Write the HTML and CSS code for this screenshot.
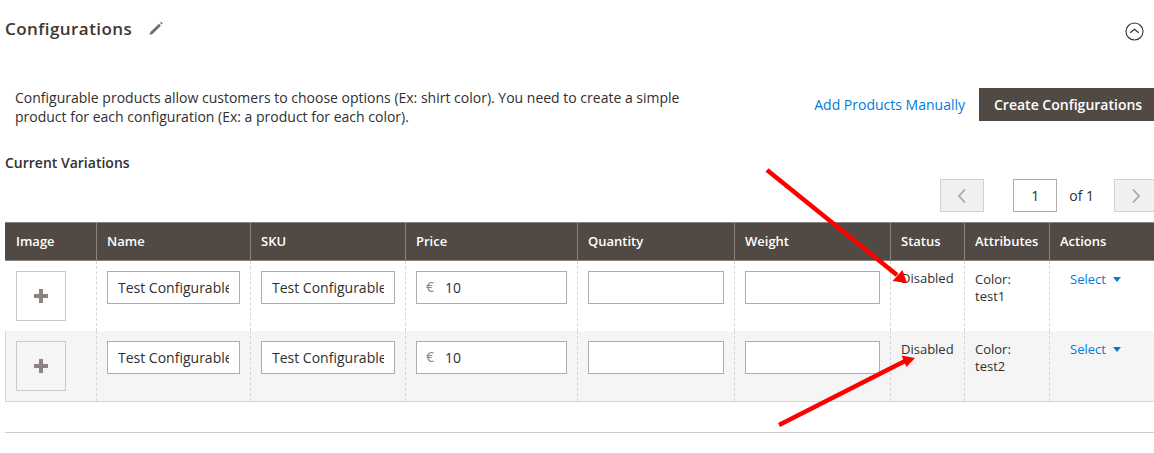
FILE: index.html
```html
<!DOCTYPE html>
<html lang="en">
<head>
<meta charset="utf-8">
<title>Configurations</title>
<link rel="stylesheet" href="styles.css">
</head>
<body>
<main class="page">
  <header class="title-row">
    <h2 class="title">Configurations</h2>
    <svg class="pencil" width="16" height="16" viewBox="0 0 16 16"><path fill="#736d66" d="M13 .8l1.800 1.800-1 1-1.800-1.800zM11 2.800l1.900 1.900-8.400 8.200-3 1 .9-3z"/></svg>
    <svg class="collapse" width="19" height="19" viewBox="0 0 19 19"><circle cx="9.500" cy="9.500" r="8.500" fill="none" stroke="#303030" stroke-width="1.100"/><path d="M5.200 10.800l4.300-3.600 4.300 3.600" fill="none" stroke="#303030" stroke-width="1.200"/></svg>
  </header>
  <section class="intro">
    <p class="intro-text">Configurable products allow customers to choose options (Ex: shirt color). You need to create a simple product for each configuration (Ex: a product for each color).</p>
    <div class="intro-actions">
      <a class="link" href="#">Add Products Manually</a>
      <button class="primary" type="button">Create Configurations</button>
    </div>
  </section>
  <h3 class="subtitle">Current Variations</h3>
  <div class="pager">
    <button class="pager-btn" type="button"><svg width="10" height="16" viewBox="0 0 10 16"><path d="M8 1.500L2 8l6 6.500" fill="none" stroke="#a8a8a8" stroke-width="1.800"/></svg></button>
    <input class="pager-input" value="1">
    <span class="pager-of">of 1</span>
    <button class="pager-btn" type="button"><svg width="10" height="16" viewBox="0 0 10 16"><path d="M2 1.500L8 8l-6 6.500" fill="none" stroke="#a8a8a8" stroke-width="1.800"/></svg></button>
  </div>
  <table class="grid">
    <colgroup>
      <col class="c-image"><col class="c-name"><col class="c-sku"><col class="c-price"><col class="c-qty"><col class="c-weight"><col class="c-status"><col class="c-attr"><col class="c-act">
    </colgroup>
    <thead>
      <tr><th>Image</th><th>Name</th><th>SKU</th><th>Price</th><th>Quantity</th><th>Weight</th><th>Status</th><th>Attributes</th><th>Actions</th></tr>
    </thead>
    <tbody>
      <tr>
        <td><div class="thumb"><svg width="14" height="14" viewBox="0 0 14 14"><path fill="#8a837f" d="M5 0h4v5h5v4H9v5H5V9H0V5h5z"/></svg></div></td>
        <td><input class="field" value="Test Configurable-test1"></td>
        <td><input class="field" value="Test Configurable-test1"></td>
        <td><div class="price"><span class="cur">€</span><input class="field field-price" value="10"></div></td>
        <td><input class="field"></td>
        <td><input class="field"></td>
        <td class="status">Disabled</td>
        <td class="attr">Color:<br>test1</td>
        <td class="act"><a class="link select" href="#">Select<span class="caret"></span></a></td>
      </tr>
      <tr class="even">
        <td><div class="thumb"><svg width="14" height="14" viewBox="0 0 14 14"><path fill="#8a837f" d="M5 0h4v5h5v4H9v5H5V9H0V5h5z"/></svg></div></td>
        <td><input class="field" value="Test Configurable-test2"></td>
        <td><input class="field" value="Test Configurable-test2"></td>
        <td><div class="price"><span class="cur">€</span><input class="field field-price" value="10"></div></td>
        <td><input class="field"></td>
        <td><input class="field"></td>
        <td class="status">Disabled</td>
        <td class="attr">Color:<br>test2</td>
        <td class="act"><a class="link select" href="#">Select<span class="caret"></span></a></td>
      </tr>
    </tbody>
  </table>
  <hr class="rule">
</main>
<svg class="arrows" width="1154" height="453" viewBox="0 0 1154 453">
  <path d="M767 170L897 275" stroke="#f00" stroke-width="4.500" fill="none"/>
  <path d="M907 283L892.500 281L902.500 270z" fill="#f00"/>
  <path d="M779 425L905 361" stroke="#f00" stroke-width="4.500" fill="none"/>
  <path d="M915 358L906.500 367L901.500 355.500z" fill="#f00"/>
</svg>
</body>
</html>
```
FILE: styles.css
```css
* { box-sizing: border-box; }
html, body { margin: 0; height: 453px; overflow: hidden; background: #fff; }
body { font-family: "Open Sans", sans-serif; font-size: 13px; color: #303030; position: relative; }
.page { padding-left: 5px; width: 1154px; }
.title-row { display: flex; align-items: center; height: 58px; }
.title { margin: -2px 0 0; font-size: 17px; font-weight: 600; letter-spacing: .43px; color: #41362f; }
.pencil { margin-left: 16px; margin-top: -1px; }
.collapse { margin-left: auto; margin-right: 10px; margin-top: 5px; }
.intro { display: flex; justify-content: space-between; align-items: flex-start; padding-left: 10px; margin-top: 30px; height: 40px; }
.intro-text { margin: 0; width: 700px; font-size: 14px; line-height: 19px; color: #303030; }
.intro-actions { display: flex; align-items: center; gap: 14px; }
.link { color: #007bdb; text-decoration: none; }
.intro-actions .link { font-size: 14px; }
.primary { height: 33px; width: 175px; padding: 0 0 0 15px; text-align: left; border: 0; background: #514943; color: #fff; font: 600 14px "Open Sans", sans-serif; }
.subtitle { margin: 25px 0 0; font-size: 14px; line-height: 19px; font-weight: 600; color: #303030; }
.pager { display: flex; align-items: center; justify-content: flex-end; height: 33px; margin-top: 7px; }
.pager-btn { width: 44px; height: 33px; padding: 0; display: flex; align-items: center; justify-content: center; background: #f0f0f0; border: 1px solid #d1d1d1; }
.pager-btn:last-child { margin-right: -4px; }
.pager-input { width: 44px; height: 33px; margin-left: 29px; border: 1px solid #adadad; text-align: center; font: 14px "Open Sans", sans-serif; color: #303030; padding: 0; }
.pager-of { margin: 0 20px 0 12px; font-size: 14px; }
.grid { margin-top: 10px; width: 1149px; table-layout: fixed; border-collapse: separate; border-spacing: 0; border-bottom: 1px solid #d6d6d6; }
.c-image { width: 91px; } .c-name { width: 154px; } .c-sku { width: 155px; } .c-price { width: 172px; } .c-qty { width: 157px; } .c-weight { width: 156px; } .c-status { width: 74px; } .c-attr { width: 85px; } .c-act { width: 105px; }
.grid th { height: 39px; padding: 0 10px 2px; text-align: left; background: #514943; color: #fff; font-size: 13px; font-weight: 600; border-top: 1px solid #8a837f; border-bottom: 1px solid #8a837f; border-left: 1px solid #8a837f; }
.grid th:first-child { border-left: 0; padding-left: 11px; }
.grid td { height: 70px; padding: 10px 10px 0; vertical-align: top; background: #fff; border-left: 1px dashed #d6d6d6; font-size: 13px; }
.grid td:first-child { border-left: 0; padding-left: 11px; }
.grid .even td { background: #f5f5f5; }
.grid .even td:first-child { box-shadow: inset 1px 0 0 #d6d6d6; }
.thumb { width: 50px; height: 50px; border: 1px solid #c9c9c9; display: flex; align-items: center; justify-content: center; }
.field { display: block; width: 100%; height: 33px; padding: 0 10px; border: 1px solid #adadad; background: #fff; font: 14px "Open Sans", sans-serif; color: #303030; }
.price { position: relative; }
.cur { position: absolute; left: 10px; top: 6px; font-size: 14px; color: #8a837f; }
.field-price { padding-left: 28px; }
.status { line-height: 16px; }
.grid td.status { padding-top: 9px; }
.grid .even td.status { padding-top: 10px; }
.attr { line-height: 17px; }
.grid td.attr { padding-top: 10px; }
.grid td.act { padding: 10px 0 0 20px; line-height: 17px; }
.caret { display: inline-block; margin-left: 7px; vertical-align: 2px; border: 4.500px solid transparent; border-top: 5px solid #007bdb; border-bottom: 0; }
.rule { margin: 30px 0 0; border: 0; border-top: 1px solid #cccccc; }
.arrows { position: absolute; left: 0; top: 0; pointer-events: none; }
```
